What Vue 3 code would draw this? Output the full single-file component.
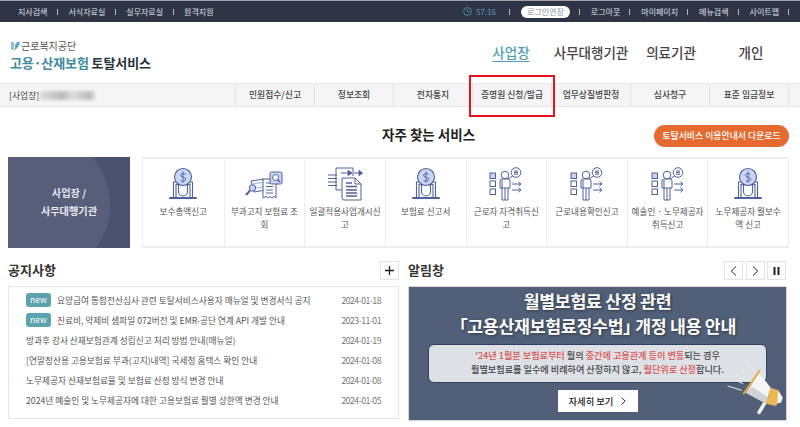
<script setup>
const leftLinks = ["지사검색", "서식자료실", "실무자료실", "원격지원"];
const rightLinks = ["로그아웃", "마이페이지", "메뉴검색", "사이트맵"];
const tabs = ["사업장", "사무대행기관", "의료기관", "개인"];
const navItems = ["민원접수/신고", "정보조회", "전자통지", "증명원 신청/발급", "업무상질병판정", "심사청구", "표준 임금정보"];
const services = [
  { icon: "bulb", label: "보수총액신고" },
  { icon: "search", label: "부과고지 보험료 조회" },
  { icon: "docs", label: "일괄적용사업개시신고" },
  { icon: "bulb", label: "보험료 신고서" },
  { icon: "person", label: "근로자 자격취득신고" },
  { icon: "person", label: "근로내용확인신고" },
  { icon: "person", label: "예술인 · 노무제공자 취득신고" },
  { icon: "bulb", label: "노무제공자 월보수액 신고" },
];
const notices = [
  { isNew: true, title: "요양급여 통합전산심사 관련 토탈서비스사용자 매뉴얼 및 변경서식 공지", date: "2024-01-18" },
  { isNew: true, title: "진료비, 약제비 샘파일 072버전 및 EMR-공단 연계 API 개발 안내", date: "2023-11-01" },
  { isNew: false, title: "방과후 강사 산재보험관계 성립신고 처리 방법 안내(매뉴얼)", date: "2024-01-19" },
  { isNew: false, title: "[연말정산용 고용보험료 부과(고지)내역] 국세청 홈택스 확인 안내", date: "2024-01-08" },
  { isNew: false, title: "노무제공자 산재보험료율 및 보험료 산정 방식 변경 안내", date: "2024-01-08" },
  { isNew: false, title: "2024년 예술인 및 노무제공자에 대한 고용보험료 월별 상한액 변경 안내", date: "2024-01-05" },
];
</script>

<template>
  <div class="page">
    <div class="topbar">
      <ul class="links">
        <li v-for="l in leftLinks" :key="l">{{ l }}</li>
      </ul>
      <ul class="links right">
        <li class="timer">
          <svg width="9" height="9" viewBox="0 0 9 9" fill="none" stroke="#4f9db0" stroke-width="0.8">
            <circle cx="4.5" cy="4.5" r="3.9" />
            <path d="M4.5 2.2v2.5h2" />
          </svg>
          57:16
        </li>
        <li class="pill-item"><span class="pill">로그인연장</span></li>
        <li v-for="l in rightLinks" :key="l">{{ l }}</li>
      </ul>
    </div>

    <header class="header">
      <div class="logo">
        <div class="logo-top">
          <svg width="10" height="10" viewBox="0 0 10 10">
            <path d="M1 1h3v8H2.500Q1 9 1 7.500z" fill="#8fc0da" />
            <path d="M5 5q0-4 4.500-4.500Q10 5 5 9z" fill="#5aa5bb" />
          </svg>
          근로복지공단
        </div>
        <div class="logo-main"><em>고용·산재보험</em> 토탈서비스</div>
      </div>
      <nav class="tabs">
        <a v-for="(t, i) in tabs" :key="t" :class="{ on: i === 0 }"><span>{{ t }}</span></a>
      </nav>
    </header>

    <div class="navbar">
      <div class="company">[사업장]<span class="blurred"></span></div>
      <div class="nav-cols">
        <div v-for="(n, i) in navItems" :key="n" class="nav-col">
          {{ n }}
          <span v-if="i === 3" class="redbox"></span>
        </div>
      </div>
    </div>

    <section class="favorites">
      <div class="fav-head">
        <h2>자주 찾는 서비스</h2>
        <a class="guide-btn">토탈서비스 이용안내서 다운로드</a>
      </div>
      <div class="fav-body">
        <div class="side-card"><span>사업장 /<br />사무대행기관</span></div>
        <div class="service-grid">
          <div v-for="s in services" :key="s.label" class="service">
            <svg v-if="s.icon === 'bulb'" class="ico" width="30" height="34" viewBox="0 0 30 34" fill="none" stroke="#4f6199" stroke-width="1.100">
              <path d="M5.500 30V15h19v15M8 30V17.500h14V30" />
              <rect x="1" y="30" width="28" height="2" rx="1" fill="#4f6199" stroke="none" />
              <path d="M10.500 17v7.500a4.500 4.500 0 0 0 9 0V17z" fill="#fff" />
              <circle cx="15" cy="10" r="8.500" fill="#c9d5f5" />
              <path d="M17.500 7.300Q15 5.700 13 7.300t2 2.900q4 1 2.500 3t-4.800.6M15 4.500v11" stroke-width="0.900" />
            </svg>
            <svg v-else-if="s.icon === 'search'" class="ico" width="38" height="34" viewBox="0 0 38 34" fill="none" stroke="#4f6199" stroke-width="1">
              <path d="M6 14l13-2 2 11-12 2z" fill="#f4f6fd" />
              <path d="M8 17l9-1.500M11 21l8-1.300" stroke="#aab6dc" />
              <circle cx="7.500" cy="21" r="3.200" fill="#c9d5f5" />
              <path d="M5 23.500L1 28" stroke-width="2" />
              <path d="M18 12h13v19l-2-1.500-2 1.500-2-1.500-2 1.500-2-1.500-3 1.500z" fill="#fff" />
              <path d="M21 16h7M21 19.500h7M21 23h7M21 26h7" />
              <rect x="25" y="5" width="12" height="12" rx="1.500" fill="#c9d5f5" />
              <circle cx="30.500" cy="10.500" r="3" fill="#fff" />
              <path d="M32.700 12.700l2.300 2.300" stroke-width="1.500" />
            </svg>
            <svg v-else-if="s.icon === 'docs'" class="ico" width="36" height="34" viewBox="0 0 36 34" fill="none" stroke="#4f6199" stroke-width="1">
              <path d="M1 8h9M1 11.500h9M1 15h9M1 18.500h9" />
              <path d="M9 1h17v8M9 1v22h7" />
              <path d="M15 11h13l6 6v16H17a2 2 0 0 1-2-2z" fill="#fff" />
              <path d="M28 11v6h6" />
              <path d="M19 16h6M19 19.500h11M19 23h11M19 26h11M19 29h11" stroke-width="1.300" />
              <path d="M14 6h10M21 3.500L25 6l-4 2.500z" fill="#4f6199" />
              <path d="M27 6h7M32 3.500L35.500 6 32 8.500z" fill="#4f6199" />
            </svg>
            <svg v-else class="ico" width="34" height="34" viewBox="0 0 34 34" fill="none" stroke="#4f6199" stroke-width="1">
              <rect x="1" y="6" width="5.500" height="5.500" fill="#c9d5f5" />
              <rect x="1" y="14" width="5.500" height="5.500" />
              <rect x="1" y="22" width="5.500" height="5.500" />
              <circle cx="16" cy="8" r="3.800" />
              <path d="M11 21v-7q0-2 2-2h6q2 0 2 2v7zM13 13v20h3V21M19 21v12h-3" fill="#fff" />
              <path d="M19 12l6-4" />
              <circle cx="27" cy="5.500" r="4.800" fill="#fff" />
              <path d="M25 4h4M25 5.600h4M25 7.200h4" />
              <path d="M23 17h9M29.500 14.800L32 17l-2.500 2.200M23 23h9M29.500 20.800L32 23l-2.500 2.200" />
            </svg>
            <p>{{ s.label }}</p>
          </div>
        </div>
      </div>
    </section>

    <section class="bottom">
      <div class="notice">
        <div class="sec-head">
          <h3>공지사항</h3>
          <button class="sq plus">
            <svg width="9" height="9" viewBox="0 0 9 9" stroke="#222" stroke-width="1.300"><path d="M4.500 0v9M0 4.500h9" /></svg>
          </button>
        </div>
        <ul class="notice-box">
          <li v-for="n in notices" :key="n.date + n.title">
            <span v-if="n.isNew" class="badge">new</span>
            <span class="n-title">{{ n.title }}</span>
            <span class="n-date">{{ n.date }}</span>
          </li>
        </ul>
      </div>

      <div class="alarm">
        <div class="sec-head">
          <h3>알림창</h3>
          <div class="ctrls">
            <button class="sq">
              <svg width="7" height="10" viewBox="0 0 7 10" fill="none" stroke="#222"><path d="M6 .5L1.300 5 6 9.500" /></svg>
            </button>
            <button class="sq">
              <svg width="7" height="10" viewBox="0 0 7 10" fill="none" stroke="#222"><path d="M1 .5L5.700 5 1 9.500" /></svg>
            </button>
            <button class="sq">
              <svg width="7" height="8" viewBox="0 0 7 8" fill="#222"><rect x="0.500" width="2" height="8" /><rect x="4.500" width="2" height="8" /></svg>
            </button>
          </div>
        </div>
        <div class="banner">
          <div class="b-title">월별보험료 산정 관련<br />「고용산재보험료징수법」 개정 내용 안내</div>
          <div class="b-box">
            <p><b>'24년 1월분 보험료부터</b> 월의 <b>중간에 고용관계 등이 변동</b>되는 경우</p>
            <p>월별보험료를 일수에 비례하여 산정하지 않고, <b>월단위로 산정</b>합니다.</p>
          </div>
          <a class="b-btn">자세히 보기
            <svg width="5" height="8" viewBox="0 0 5 8" fill="none" stroke="#333"><path d="M.6.6L4.200 4 .6 7.400" /></svg>
          </a>
          <svg class="megaphone" width="61" height="64" viewBox="0 0 61 64" fill="none">
            <path d="M20 3.300L30 16.700M16.700 13.300L23.300 18.300M8.300 16.700L20 23.300M10 24.300L18.300 27.700M2.700 30L16.700 34.300" stroke="#e8ebf0" stroke-width="1" />
            <path d="M40 46.700L33.300 57.700" stroke="#f2f2f2" stroke-width="3.500" />
            <path d="M34 16.700L21 36.700 41 47.700 45.700 31.700z" fill="#f5f5f5" />
            <path d="M21 36.700L41 47.700 43 41 27 31z" fill="#cfd2d8" />
            <path d="M45.700 31.700L53.300 34.300 56 42.300 51 50 41 47.700z" fill="#ecb650" />
            <path d="M53.300 34.300L57.700 41.700 56 46.700 52 47z" fill="#f5f5f5" />
            <path d="M35 14.300L18.300 38.300" stroke="#e8a93f" stroke-width="2" />
          </svg>
        </div>
      </div>
    </section>
  </div>
</template>

<style scoped>
.page {
  width: 800px;
  height: 427px;
  overflow: hidden;
  background: #fff;
  font-family: "Noto Sans CJK KR", "Noto Sans", sans-serif;
  color: #444;
}
ul {
  list-style: none;
  margin: 0;
  padding: 0;
}
p,
h2,
h3 {
  margin: 0;
}

.topbar {
  height: 21px;
  border-top: 1px solid #a5a5a5;
  background: #2f3447;
  display: flex;
  justify-content: space-between;
  padding: 0 11px 0 18px;
  font-size: 8px;
  color: #dfe1e6;
}
.links {
  display: flex;
  align-items: center;
}
.links li {
  display: flex;
  align-items: center;
}
.links li:not(:last-child)::after {
  content: "";
  width: 1px;
  height: 6px;
  background: #b5b8c2;
  margin: 0 10px;
}
.links.right li::after,
.links.right li:last-child::after {
  content: "";
  width: 1px;
  height: 6px;
  background: #b5b8c2;
  margin: 0 11px 0 9px;
}
.links.right li:last-child::after {
  margin-right: 0;
}
.timer {
  color: #4f9db0;
  gap: 4px;
}
.pill {
  background: #fff;
  color: #8b8f99;
  border-radius: 8px;
  padding: 0 6px;
  height: 12px;
  line-height: 12px;
  font-size: 8px;
}

.header {
  height: 61px;
  display: flex;
  justify-content: space-between;
}
.logo {
  padding: 17px 0 0 10px;
}
.logo-top {
  display: flex;
  align-items: center;
  gap: 1px;
  font-size: 10px;
  line-height: 14px;
  color: #555;
}
.logo-main {
  font-size: 13px;
  line-height: 19px;
  font-weight: 700;
  letter-spacing: -0.100px;
  color: #27333a;
  white-space: nowrap;
}
.logo-main em {
  font-style: normal;
  color: #3f8b9e;
}
.tabs {
  display: flex;
  margin-right: 9px;
  padding-top: 20px;
}
.tabs a {
  width: 80px;
  text-align: center;
  font-size: 13.500px;
  line-height: 20px;
  font-weight: 500;
  color: #444;
}
.tabs a.on {
  color: #4f9db0;
}
.tabs a.on span {
  text-decoration: underline;
  text-underline-offset: 3px;
}

.navbar {
  height: 24px;
  background: #f5f5f5;
  border-top: 1px solid #e8e8e8;
  border-bottom: 1px solid #e8e8e8;
  box-sizing: border-box;
  display: flex;
  justify-content: space-between;
  padding-left: 9px;
  font-size: 8.800px;
}
.company {
  display: flex;
  align-items: center;
  color: #444;
}
.blurred {
  width: 55px;
  height: 9px;
  margin-left: 1px;
  background: linear-gradient(90deg, #ddd, #bbb 40%, #ddd 60%, #bbb 90%, #ddd);
  filter: blur(1.500px);
}
.nav-cols {
  display: flex;
  margin-right: 11px;
  border-left: 1px solid #e3e3e3;
}
.nav-col {
  position: relative;
  width: 79px;
  box-sizing: border-box;
  border-right: 1px solid #e3e3e3;
  text-align: center;
  line-height: 22px;
  font-weight: 500;
  font-size: 8.800px;
  color: #444;
  white-space: nowrap;
}
.redbox {
  position: absolute;
  top: -9px;
  left: -4px;
  right: -4px;
  bottom: -11px;
  border: 2px solid #e8141c;
}

.favorites {
  padding: 0 11px 0 8px;
}
.fav-head {
  position: relative;
  height: 50px;
  padding-top: 18px;
  box-sizing: border-box;
}
.fav-head h2 {
  position: absolute;
  left: 374px;
  top: 17px;
  font-size: 13.500px;
  line-height: 20px;
  font-weight: 700;
  color: #222;
  white-space: nowrap;
}
.guide-btn {
  position: absolute;
  right: 0;
  top: 18px;
  width: 135px;
  height: 22px;
  border-radius: 11px;
  background: #e56a30;
  color: #fff;
  font-size: 8.900px;
  line-height: 22px;
  text-align: center;
  font-weight: 500;
  white-space: nowrap;
}
.fav-body {
  display: flex;
  gap: 12px;
  height: 91px;
}
.side-card {
  position: relative;
  overflow: hidden;
  width: 122px;
  padding-bottom: 2px;
  box-sizing: border-box;
  background: #4b5270;
  color: #e6e7ee;
  font-size: 10.200px;
  font-weight: 700;
  line-height: 18px;
  text-align: center;
  display: flex;
  align-items: center;
  justify-content: center;
}
.side-card::before {
  content: "";
  position: absolute;
  width: 150px;
  height: 150px;
  left: -48px;
  top: -27px;
  border-radius: 50%;
  background: rgba(255, 255, 255, 0.07);
}
.side-card span {
  position: relative;
}
.service-grid {
  flex: 1;
  display: grid;
  grid-template-columns: repeat(8, 1fr);
  border: 1px solid #eee;
  border-width: 2px 1px;
}
.service {
  min-width: 0;
  border-left: 1px solid #eee;
  padding: 8px 3.800px 0;
  text-align: center;
  display: flex;
  flex-direction: column;
  align-items: center;
}
.service:first-child {
  border-left: 0;
}
.ico {
  flex: none;
}
.service p {
  margin-top: 4px;
  font-size: 8.600px;
  line-height: 13px;
  color: #555;
  word-break: break-all;
}

.bottom {
  display: flex;
  padding: 0 13px 0 8px;
  gap: 9px;
  margin-top: 12px;
}
.notice {
  width: 391px;
}
.alarm {
  width: 379px;
}
.sec-head {
  display: flex;
  justify-content: space-between;
  align-items: flex-start;
  height: 25px;
  padding-top: 1px;
}
.sec-head h3 {
  font-size: 13px;
  line-height: 18px;
  font-weight: 700;
  color: #333;
}
.sq {
  width: 19px;
  height: 19px;
  padding: 0;
  background: #fff;
  border: 1px solid #e2e2e2;
  display: flex;
  align-items: center;
  justify-content: center;
}
.ctrls {
  display: flex;
  gap: 2.500px;
  margin-right: 1px;
}
.notice-box {
  border: 1px solid #e5e5e5;
  height: 133px;
  box-sizing: border-box;
  padding: 3px 17px;
}
.notice-box li {
  height: 20px;
  display: flex;
  align-items: center;
  font-size: 8.700px;
  color: #555;
  white-space: nowrap;
}
.badge {
  width: 25px;
  height: 14px;
  line-height: 13px;
  background: #5ba3ae;
  color: #fff;
  border-radius: 3px;
  text-align: center;
  font-size: 8.500px;
  margin-right: 6px;
}
.n-date {
  margin-left: auto;
  color: #777;
  letter-spacing: -0.500px;
}
.banner {
  position: relative;
  height: 135px;
  box-sizing: border-box;
  background: #516078;
  border: 1px solid #d5d8de;
  padding-top: 1px;
  text-align: center;
}
.b-title {
  color: #fff;
  font-size: 17.300px;
  font-weight: 700;
  line-height: 25px;
  letter-spacing: -0.300px;
  font-feature-settings: "palt";
  text-shadow: 1px 1px 3px rgba(0, 0, 0, 0.45);
  white-space: nowrap;
}
.b-box {
  margin: 6px 19px 0;
  height: 39px;
  box-sizing: border-box;
  background: #dde0e5;
  border: 1px solid #2c4163;
  border-radius: 6px;
  padding-top: 4px;
  font-size: 9.150px;
  line-height: 13.500px;
  font-weight: 500;
  color: #444;
  white-space: nowrap;
}
.b-box b {
  font-weight: 500;
  color: #d9534f;
}
.b-btn {
  width: 80px;
  height: 22px;
  margin: 7px auto 0;
  background: #fff;
  color: #222;
  font-size: 9.300px;
  font-weight: 500;
  display: flex;
  align-items: center;
  justify-content: center;
  gap: 8px;
}
.megaphone {
  position: absolute;
  right: 0;
  bottom: 0;
}
</style>

<style>
html,
body {
  margin: 0;
  background: #fff;
}
</style>
